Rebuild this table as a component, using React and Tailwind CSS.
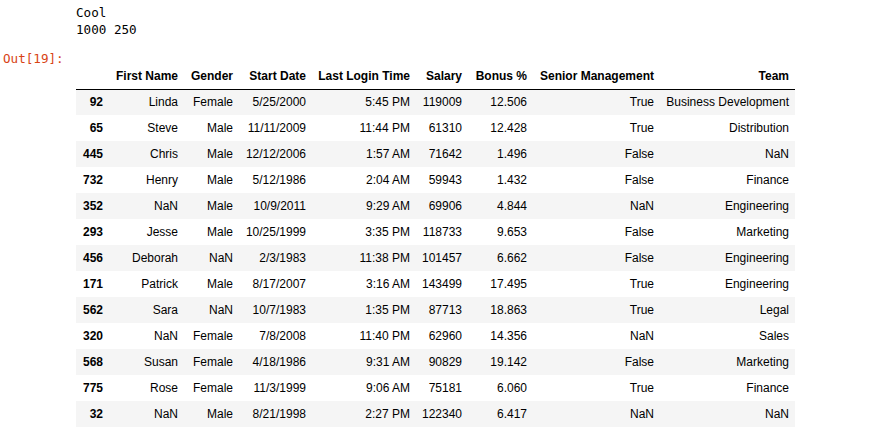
import React from "react";

const cols = [
  { key: "First Name", w: "w-[74px]" },
  { key: "Gender", w: "w-[55px]" },
  { key: "Start Date", w: "w-[73px]" },
  { key: "Last Login Time", w: "w-[104px]" },
  { key: "Salary", w: "w-[52px]" },
  { key: "Bonus %", w: "w-[65px]" },
  { key: "Senior Management", w: "w-[127px]" },
  { key: "Team", w: "w-[135px]" },
];

const rows = [
  ["92", "Linda", "Female", "5/25/2000", "5:45 PM", "119009", "12.506", "True", "Business Development"],
  ["65", "Steve", "Male", "11/11/2009", "11:44 PM", "61310", "12.428", "True", "Distribution"],
  ["445", "Chris", "Male", "12/12/2006", "1:57 AM", "71642", "1.496", "False", "NaN"],
  ["732", "Henry", "Male", "5/12/1986", "2:04 AM", "59943", "1.432", "False", "Finance"],
  ["352", "NaN", "Male", "10/9/2011", "9:29 AM", "69906", "4.844", "NaN", "Engineering"],
  ["293", "Jesse", "Male", "10/25/1999", "3:35 PM", "118733", "9.653", "False", "Marketing"],
  ["456", "Deborah", "NaN", "2/3/1983", "11:38 PM", "101457", "6.662", "False", "Engineering"],
  ["171", "Patrick", "Male", "8/17/2007", "3:16 AM", "143499", "17.495", "True", "Engineering"],
  ["562", "Sara", "NaN", "10/7/1983", "1:35 PM", "87713", "18.863", "True", "Legal"],
  ["320", "NaN", "Female", "7/8/2008", "11:40 PM", "62960", "14.356", "NaN", "Sales"],
  ["568", "Susan", "Female", "4/18/1986", "9:31 AM", "90829", "19.142", "False", "Marketing"],
  ["775", "Rose", "Female", "11/3/1999", "9:06 AM", "75181", "6.060", "True", "Finance"],
  ["32", "NaN", "Male", "8/21/1998", "2:27 PM", "122340", "6.417", "NaN", "NaN"],
];

export default function App() {
  return (
    <div className="w-[869px] h-[430px] bg-white overflow-hidden text-black">
      <div className="pl-[76px] pt-[4px] font-['DejaVu_Sans_Mono',monospace] text-[12.6px] leading-[17px] whitespace-pre">
        <div>Cool</div>
        <div>1000 250</div>
      </div>
      <div className="flex mt-[12px]">
        <div className="w-[76px] shrink-0 pl-[3px] font-['DejaVu_Sans_Mono',monospace] text-[12.6px] leading-[17px] text-[#d84315]">
          Out[19]:
        </div>
        <table className="mt-[13px] table-fixed border-collapse w-[719px] font-['Liberation_Sans',Arial,sans-serif] text-[12px] leading-[14px]">
          <thead>
            <tr className="border-b border-black">
              <th className="w-[34px] h-[26px] px-[6px]"></th>
              {cols.map((c) => (
                <th key={c.key} className={`${c.w} h-[26px] px-[6px] text-right font-bold whitespace-nowrap`}>
                  {c.key}
                </th>
              ))}
            </tr>
          </thead>
          <tbody>
            {rows.map((r, i) => (
              <tr key={r[0]} className={i % 2 === 0 ? "bg-[#f5f5f5]" : "bg-white"}>
                <th className="h-[26px] pl-[6px] pr-[7px] text-right font-bold">{r[0]}</th>
                {r.slice(1).map((v, j) => (
                  <td key={j} className="h-[26px] px-[6px] text-right whitespace-nowrap">
                    {v}
                  </td>
                ))}
              </tr>
            ))}
          </tbody>
        </table>
      </div>
    </div>
  );
}
